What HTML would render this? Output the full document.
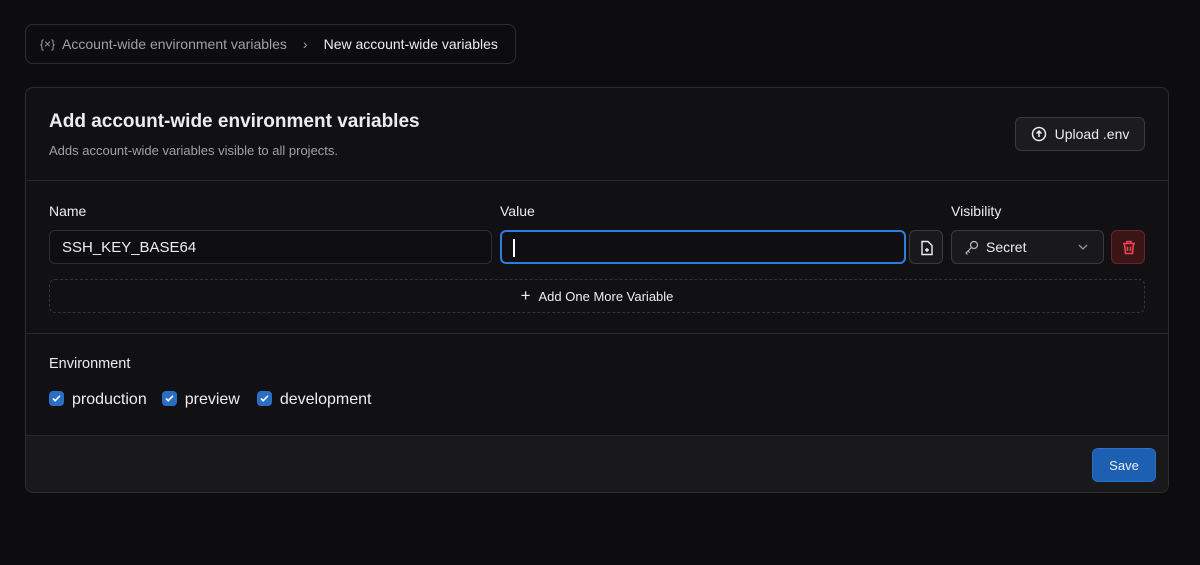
<!DOCTYPE html>
<html><head><style>
*{box-sizing:border-box;margin:0;padding:0}
body{width:1200px;height:565px;background:#0d0d0f;font-family:"Liberation Sans",sans-serif;color:#ededef;position:relative;overflow:hidden}
.crumb{position:absolute;left:25px;top:24px;width:491px;height:40px;border:1px solid #2e2e32;border-radius:8px;font-size:14px;display:flex;align-items:center;padding-left:14px}
.crumb .a{color:#a0a0a6}
.card{position:absolute;left:25px;top:87px;width:1144px;height:406px;border:1px solid #2e2e32;border-radius:8px;background:#111113;overflow:hidden}
.abs{position:absolute}
.line{position:absolute;left:0;right:0;height:1px;background:#2a2a2e}
.inp{position:absolute;height:34px;border:1px solid #2e2e32;border-radius:6px;background:#0f0f11}
.btn{position:absolute;border:1px solid #3a3a3f;border-radius:6px;background:#1c1c1f}
.cb{display:inline-block;width:15px;height:15px;border-radius:4px;background:#2a6ec4;vertical-align:-2px;margin-right:8px;position:relative}
</style></head><body>
<div class="crumb"><span class="a" style="font-size:12px;margin-right:7px">{×}</span><span class="a">Account-wide environment variables</span><span class="a" style="margin:0 16px">›</span><span>New account-wide variables</span></div>
<div class="card">
 <div class="abs" style="left:23px;top:23px;font-size:19px;font-weight:bold">Add account-wide environment variables</div>
 <div class="abs" style="left:23px;top:55px;font-size:13px;color:#a0a0a6">Adds account-wide variables visible to all projects.</div>
 <div class="btn" style="left:989px;top:29px;width:130px;height:34px;font-size:14px;display:flex;align-items:center;justify-content:center;gap:8px"><svg width="16" height="16" viewBox="0 0 16 16" fill="none" stroke="#eee" stroke-width="1.5"><circle cx="8" cy="8" r="6.5"/><path d="M8 11V5M5.5 7.5L8 5l2.5 2.5"/></svg>Upload .env</div>
 <div class="line" style="top:92px"></div>
 <div class="abs" style="left:23px;top:115px;font-size:14px">Name</div>
 <div class="abs" style="left:474px;top:115px;font-size:14px">Value</div>
 <div class="abs" style="left:925px;top:115px;font-size:14px">Visibility</div>
 <div class="inp" style="left:23px;top:142px;width:443px;font-size:15px;padding:8px 12px">SSH_KEY_BASE64</div>
 <div class="inp" style="left:474px;top:142px;width:406px;border:2px solid #2f7de0"><div style="position:absolute;left:11px;top:7px;width:1.5px;height:18px;background:#fff"></div></div>
 <div class="btn" style="left:883px;top:142px;width:34px;height:34px;background:#19191c"><svg class="abs" style="left:10px;top:9px" width="14" height="16" viewBox="0 0 14 16" fill="none" stroke="#eee" stroke-width="1.4"><path d="M2 1.5h6l4 4v9H2z"/><path d="M7 8v4M5 10h4"/></svg></div>
 <div class="btn" style="left:925px;top:142px;width:153px;height:34px;background:#19191c;font-size:14px;padding:8px 0 0 34px">Secret<svg class="abs" style="left:12px;top:9px" width="15" height="15" viewBox="0 0 15 15" fill="none" stroke="#bbb" stroke-width="1.2"><circle cx="10" cy="5" r="3.5"/><path d="M7.5 7.5L2 13l1.5 1.5M4 11l1.5 1.5"/></svg><svg class="abs" style="left:126px;top:13px" width="10" height="7" viewBox="0 0 10 7" fill="none" stroke="#999" stroke-width="1.3"><path d="M1 1l4 4 4-4"/></svg></div>
 <div class="btn" style="left:1085px;top:142px;width:34px;height:34px;background:#3a1518;border-color:#6a2428"><svg class="abs" style="left:10px;top:9px" width="14" height="15" viewBox="0 0 14 15" fill="none" stroke="#ee4452" stroke-width="1.6"><path d="M1 3.5h12M5 3.5V1.5h4v2M2.5 3.5l1 10h7l1-10M5.5 6.5v4.5M8.5 6.5v4.5"/></svg></div>
 <div class="abs" style="left:23px;top:191px;width:1096px;height:34px;border:1px dashed #34343a;border-radius:6px;font-size:13px;display:flex;align-items:center;justify-content:center"><span style="font-size:17px;margin-right:8px">+</span>Add One More Variable</div>
 <div class="line" style="top:245px"></div>
 <div class="abs" style="left:23px;top:268px;font-size:14.5px">Environment</div>
 <div class="abs" style="left:23px;top:303px;font-size:16px;white-space:nowrap">
  <span class="cb"><svg class="abs" style="left:3px;top:3px" width="9" height="9" viewBox="0 0 9 9" fill="none" stroke="#fff" stroke-width="1.6"><path d="M1 4.5l2.2 2.2L8 1.8"/></svg></span>production<span style="display:inline-block;width:15px"></span><span class="cb"><svg class="abs" style="left:3px;top:3px" width="9" height="9" viewBox="0 0 9 9" fill="none" stroke="#fff" stroke-width="1.6"><path d="M1 4.5l2.2 2.2L8 1.8"/></svg></span>preview<span style="display:inline-block;width:17px"></span><span class="cb"><svg class="abs" style="left:3px;top:3px" width="9" height="9" viewBox="0 0 9 9" fill="none" stroke="#fff" stroke-width="1.6"><path d="M1 4.5l2.2 2.2L8 1.8"/></svg></span>development
 </div>
 <div class="abs" style="left:0;right:0;top:347px;bottom:0;background:#19191b;border-top:1px solid #2a2a2e"></div>
 <div class="abs" style="left:1066px;top:360px;width:64px;height:34px;border-radius:6px;background:#1d5fb0;border:1px solid #2a70c8;font-size:13px;display:flex;align-items:center;justify-content:center">Save</div>
</div>
</body></html>
